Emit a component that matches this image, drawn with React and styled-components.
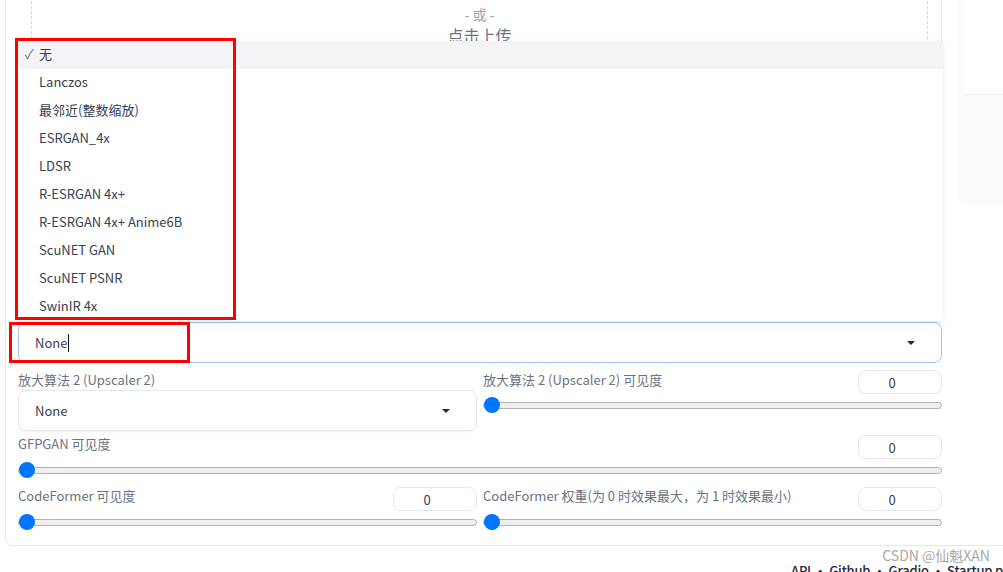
import React from "react";
import styled, { createGlobalStyle } from "styled-components";

const GlobalStyle = createGlobalStyle`
  html, body {
    margin: 0;
    padding: 0;
    background: #ffffff;
    overflow: hidden;
  }
  body {
    font-family: "Noto Sans CJK SC", "Noto Sans", sans-serif;
    color: #374151;
  }
  * { box-sizing: border-box; }
`;

const Page = styled.div`
  position: relative;
  width: 1003px;
  height: 572px;
  overflow: hidden;
`;

const Panel = styled.div`
  margin: -60px 0 0 5px;
  width: 1060px;
  padding: 0 12px 15px;
  border: 1px solid #e5e7eb;
  border-radius: 8px;
  display: flex;
  gap: 15px;
`;

const LeftCol = styled.div`
  width: 924px;
  display: flex;
  flex-direction: column;
`;

const RightCol = styled.div`
  flex: 1;
`;

const GrayBox = styled.div`
  height: 264px;
  background: #f9fafb;
  border-radius: 0 0 0 10px;
  padding-left: 7px;
`;

const WhiteBox = styled.div`
  height: 154px;
  background: #ffffff;
  border-bottom: 1px solid #f0f1f3;
`;

const UploadFrame = styled.div`
  height: 372px;
  padding: 0 13px 13px 13px;
  border-right: 1px solid #e5e7eb;
`;

const DropZone = styled.div`
  height: 100%;
  border: 1px dashed #d1d5db;
  border-top: none;
  display: flex;
  flex-direction: column;
  align-items: center;
  padding-top: 64px;
`;

const OrText = styled.div`
  font-size: 14px;
  line-height: 18px;
  color: #9ca3af;
`;

const ClickText = styled.div`
  font-size: 16px;
  line-height: 24px;
  color: #6b7280;
`;

const SelectBox = styled.div`
  position: relative;
  height: 41px;
  margin-top: ${(p) => p.mt || 0}px;
  border: 1px solid ${(p) => (p.focus ? "#9cc6fb" : "#e5e7eb")};
  border-radius: 8px;
  background: #ffffff;
  box-shadow: ${(p) => (p.focus ? "none" : "0 1px 2px rgba(0,0,0,0.05)")};
  display: flex;
  align-items: center;
  padding: 0 26px 0 16px;
  font-size: 13px;
  color: #374151;
`;

const Value = styled.span`
  flex: 1;
  display: flex;
  align-items: center;
`;

const Caret = styled.span`
  display: inline-block;
  width: 1px;
  height: 18px;
  background: #111;
  margin-left: 1px;
`;

const Arrow = styled.span`
  width: 0;
  height: 0;
  border-left: 4px solid transparent;
  border-right: 4px solid transparent;
  border-top: 4px solid #1f2937;
`;

const Menu = styled.ul`
  position: absolute;
  left: -3px;
  right: -2px;
  bottom: calc(100% + 2px);
  margin: 0;
  padding: 0;
  list-style: none;
  background: #ffffff;
  border-radius: 8px 8px 0 0;
  box-shadow: 0 1px 4px rgba(0, 0, 0, 0.12);
  overflow: hidden;
  z-index: 5;
`;

const MenuItem = styled.li`
  height: 28px;
  display: flex;
  align-items: center;
  padding-left: 9px;
  padding-bottom: 3px;
  font-size: 13px;
  color: #374151;
  background: ${(p) => (p.active ? "#f3f4f6" : "transparent")};
`;

const Check = styled.span`
  width: 14px;
  font-weight: 300;
  visibility: ${(p) => (p.show ? "visible" : "hidden")};
`;

const Grid2 = styled.div`
  display: grid;
  grid-template-columns: 459px 459px;
  column-gap: 6px;
  margin-top: ${(p) => p.mt || 0}px;
`;

const Field = styled.div`
  display: flex;
  flex-direction: column;
  margin-top: ${(p) => p.mt || 0}px;
`;

const Head = styled.div`
  display: flex;
  justify-content: space-between;
  align-items: flex-start;
`;

const Label = styled.span`
  font-size: 13px;
  line-height: 18px;
  padding-top: ${(p) => p.pt || 0}px;
  color: #6b7280;
  white-space: nowrap;
`;

const NumBox = styled.div`
  width: 84px;
  height: 24px;
  border: 1px solid #e5e7eb;
  border-radius: 8px;
  display: flex;
  align-items: center;
  justify-content: center;
  padding-right: 16px;
  font-size: 13px;
  color: #374151;
`;

const Range = styled.input.attrs({ type: "range", min: 0, max: 1, step: 0.001 })`
  -webkit-appearance: none;
  appearance: none;
  display: block;
  width: 100%;
  height: 16px;
  margin: 3px 0 0;
  background: transparent;
  &::-webkit-slider-runnable-track {
    height: 7px;
    background: #efefef;
    border: 1px solid #b2b2b2;
    border-radius: 4px;
  }
  &::-webkit-slider-thumb {
    -webkit-appearance: none;
    width: 16px;
    height: 16px;
    border-radius: 50%;
    background: #0075ff;
    border: none;
    margin-top: -5.5px;
  }
`;

const Mark = styled.div`
  position: absolute;
  left: ${(p) => p.x}px;
  top: ${(p) => p.y}px;
  width: ${(p) => p.w}px;
  height: ${(p) => p.h}px;
  border: 3px solid #ff0000;
  z-index: 10;
  pointer-events: none;
`;

const Watermark = styled.div`
  position: absolute;
  right: 13px;
  top: 547px;
  font-size: 14px;
  line-height: 16px;
  color: #a8a8a8;
  z-index: 10;
`;

const Footer = styled.div`
  margin-top: 17px;
  padding-left: 791px;
  white-space: nowrap;
  font-size: 13px;
  line-height: 16px;
  font-weight: 500;
  letter-spacing: -0.2px;
  color: #1f2937;
`;

const upscalers = [
  "无",
  "Lanczos",
  "最邻近(整数缩放)",
  "ESRGAN_4x",
  "LDSR",
  "R-ESRGAN 4x+",
  "R-ESRGAN 4x+ Anime6B",
  "ScuNET GAN",
  "ScuNET PSNR",
  "SwinIR 4x",
];

const Slider = ({ label, value = "0", pt }) => (
  <Field>
    <Head>
      <Label pt={pt}>{label}</Label>
      <NumBox>{value}</NumBox>
    </Head>
    <Range defaultValue={0} />
  </Field>
);

export default function App() {
  return (
    <Page>
      <GlobalStyle />
      <Panel>
        <LeftCol>
          <UploadFrame>
            <DropZone>
              <OrText>- 或 -</OrText>
              <ClickText>点击上传</ClickText>
            </DropZone>
          </UploadFrame>

          <SelectBox focus mt={9}>
            <Menu>
              {upscalers.map((name, i) => (
                <MenuItem key={name} active={i === 0}>
                  <Check show={i === 0}>✓</Check>
                  {name}
                </MenuItem>
              ))}
            </Menu>
            <Value>
              None
              <Caret />
            </Value>
            <Arrow />
          </SelectBox>

          <Grid2 mt={7}>
            <Field>
              <Label pt={1}>放大算法 2 (Upscaler 2)</Label>
              <SelectBox mt={1}>
                <Value>None</Value>
                <Arrow />
              </SelectBox>
            </Field>
            <Slider label="放大算法 2 (Upscaler 2) 可见度" pt={1} />
          </Grid2>

          <Field mt={4}>
            <Slider label="GFPGAN 可见度" />
          </Field>

          <Grid2 mt={9}>
            <Slider label="CodeFormer 可见度" />
            <Slider label="CodeFormer 权重(为 0 时效果最大，为 1 时效果最小)" />
          </Grid2>
        </LeftCol>
        <RightCol>
          <GrayBox>
            <WhiteBox />
          </GrayBox>
        </RightCol>
      </Panel>

      <Footer>API • Github • Gradio • Startup profile • Reload UI</Footer>

      <Watermark>CSDN @仙魁XAN</Watermark>
      <Mark x={15} y={38} w={221} h={282} />
      <Mark x={9} y={322} w={181} h={41} />
    </Page>
  );
}
